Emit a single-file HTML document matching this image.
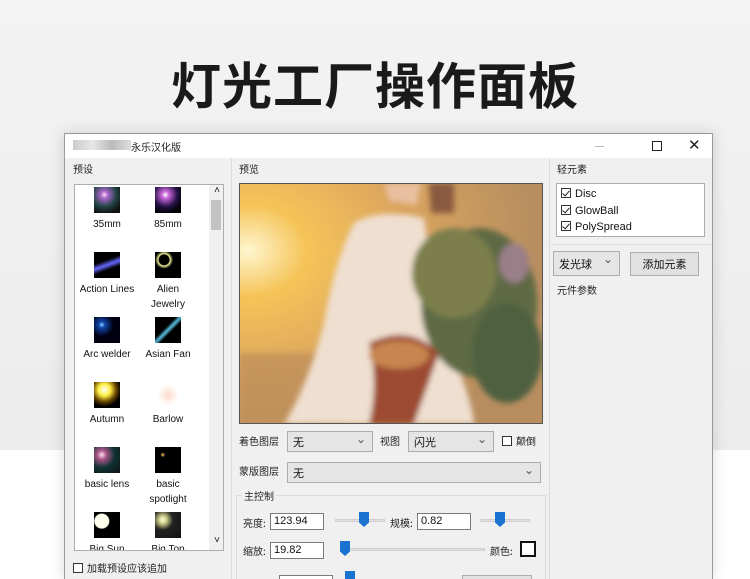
<!DOCTYPE html>
<html><head><meta charset="utf-8"><style>
*{margin:0;padding:0;box-sizing:border-box}
html,body{width:750px;height:579px;overflow:hidden}
body{position:relative;background:#fff;font-family:"Liberation Sans","Noto Sans CJK SC",sans-serif;font-size:11px;color:#111}
.bgtop{position:absolute;left:0;top:0;width:750px;height:450px;background:linear-gradient(#f3f3f3,#ececec)}
h1{position:absolute;left:0;width:750px;top:50px;text-align:center;font-size:50px;font-weight:bold;color:#1a1a1a;letter-spacing:1px;font-family:"Noto Sans CJK SC",sans-serif;line-height:66px}
.win{position:absolute;left:64px;top:133px;width:649px;height:446px;background:#f0f0f0;border:1px solid #9a9a9a;border-bottom:none;box-shadow:0 0 14px rgba(0,0,0,.15)}
.tb{position:absolute;left:0;top:0;width:647px;height:24px;background:#fff}
.a{position:absolute;white-space:nowrap}
.lbl{font-family:"Noto Sans CJK SC",sans-serif;font-size:10px;color:#222}
.list{position:absolute;left:9px;top:50px;width:150px;height:367px;background:#fff;border:1px solid #adadad;overflow:hidden}
.it{position:absolute;width:60px;text-align:center;font-size:10px;line-height:15px}
.ic{width:26px;height:26px;background:#000;margin:0 auto 4px}
.combo{position:absolute;background:#e5e5e5;border:1px solid #adadad;font-family:"Noto Sans CJK SC",sans-serif;font-size:11px;padding:2px 5px;height:21px}
.combo:after{content:"⌄";position:absolute;right:6px;top:-2px;font-size:12px;color:#555}
.inp{position:absolute;background:#fff;border:1px solid #7a7a7a;height:17px;font-size:11px;padding:1px 3px}
.trk{position:absolute;height:3px;background:#e0e0e0;border:1px solid #d0d0d0}
.th{position:absolute;width:10px;height:15px;background:#1a73d0;clip-path:polygon(0 0,100% 0,100% 70%,50% 100%,0 70%)}
.cb{display:inline-block;width:10px;height:10px;border:1px solid #333;vertical-align:-1px;margin-right:4px;position:relative;background:#fff}
.cb.k:after{content:"";position:absolute;left:2px;top:0;width:3px;height:6px;border:solid #222;border-width:0 1px 1px 0;transform:rotate(40deg)}
.btn{position:absolute;background:#e1e1e1;border:1px solid #adadad;text-align:center;font-family:"Noto Sans CJK SC",sans-serif;font-size:11px}
</style></head><body>
<div class="bgtop"></div>
<h1>灯光工厂操作面板</h1>
<div class="win">
 <div class="tb"></div>
 <div class="a" style="left:8px;top:6px;width:58px;height:10px;background:linear-gradient(90deg,#ccc,#e6e6e6,#bbb,#ddd)"></div>
 <div class="a lbl" style="left:66px;top:5px">永乐汉化版</div>
 <div class="a" style="left:530px;top:12px;width:9px;height:1px;background:#bbb"></div>
 <div class="a" style="left:587px;top:7px;width:10px;height:10px;border:1px solid #222"></div>
 <div class="a" style="left:623px;top:2px;font-size:15px;color:#222">✕</div>
 <div class="a" style="left:166px;top:24px;width:1px;height:422px;background:#dcdcdc"></div>
 <div class="a" style="left:484px;top:24px;width:1px;height:422px;background:#dcdcdc"></div>
 <div class="a lbl" style="left:8px;top:27px">预设</div>
 <div class="a lbl" style="left:174px;top:27px">预览</div>
 <div class="a lbl" style="left:492px;top:27px">轻元素</div>
 <div class="list">
  <div class="a" style="right:0;top:0;width:14px;height:367px;background:#f0f0f0"></div>
  <div class="a" style="right:2px;top:15px;width:10px;height:30px;background:#c2c2c2"></div>
  <div class="a" style="right:3px;top:0;font-size:10px">˄</div>
  <div class="a" style="right:3px;top:350px;font-size:10px">˅</div>
  <div class="it" style="left:2px;top:2px"><div class="ic" style="background:radial-gradient(circle at 40% 30%,#fde 0,#a6c 15%,#244 50%,#111 80%)"></div>35mm</div>
  <div class="it" style="left:63px;top:2px"><div class="ic" style="background:radial-gradient(circle at 40% 30%,#fff 0,#c6d 15%,#214 50%,#000 80%)"></div>85mm</div>
  <div class="it" style="left:2px;top:67px"><div class="ic" style="background:linear-gradient(160deg,#000 35%,#66f 50%,#000 65%)"></div>Action Lines</div>
  <div class="it" style="left:63px;top:67px"><div class="ic" style="background:radial-gradient(circle at 35% 30%,#000 5px,#ee9 6px,#000 9px)"></div>Alien<br>Jewelry</div>
  <div class="it" style="left:2px;top:132px"><div class="ic" style="background:radial-gradient(circle at 30% 30%,#8cf 0,#14a 12%,#001 45%)"></div>Arc welder</div>
  <div class="it" style="left:63px;top:132px"><div class="ic" style="background:linear-gradient(135deg,#000 40%,#5bd 50%,#000 60%)"></div>Asian Fan</div>
  <div class="it" style="left:2px;top:197px"><div class="ic" style="background:radial-gradient(circle at 40% 30%,#fff 0,#fe4 25%,#640 50%,#000 70%)"></div>Autumn</div>
  <div class="it" style="left:63px;top:197px"><div class="ic" style="background:radial-gradient(ellipse at 50% 50%,#fdc 0,#fff 60%)"></div>Barlow</div>
  <div class="it" style="left:2px;top:262px"><div class="ic" style="background:radial-gradient(circle at 30% 30%,#fde 0,#a58 18%,#133 50%,#111)"></div>basic lens</div>
  <div class="it" style="left:63px;top:262px"><div class="ic" style="background:radial-gradient(circle at 30% 30%,#fc6 0,#000 10%)"></div>basic<br>spotlight</div>
  <div class="it" style="left:2px;top:327px"><div class="ic" style="background:radial-gradient(circle at 30% 35%,#ffe 7px,#000 8px)"></div>Big Sun</div>
  <div class="it" style="left:63px;top:327px"><div class="ic" style="background:radial-gradient(circle at 30% 30%,#ffd 0,#cc8 15%,#222 40%,#111)"></div>Big Top</div>
 </div>
 <div class="a lbl" style="left:8px;top:426px"><span class="cb"></span>加载预设应该追加</div>
 <svg class="a" style="left:174px;top:49px" width="304" height="241" viewBox="0 0 304 241">
  <defs>
   <radialGradient id="sun" cx="0.03" cy="0.28" r="0.95"><stop offset="0" stop-color="#fff6d0"/><stop offset="0.2" stop-color="#f5c458"/><stop offset="0.55" stop-color="#dba55e"/><stop offset="1" stop-color="#b88e60"/></radialGradient>
   <filter id="bl"><feGaussianBlur stdDeviation="3"/></filter>
  </defs>
  <rect width="304" height="241" fill="url(#sun)"/>
  <rect x="0" y="170" width="110" height="71" fill="#b88a5a" opacity=".6" filter="url(#bl)"/>
  <g filter="url(#bl)">
   <path d="M115 40 Q140 25 185 35 L200 150 Q230 200 235 241 L45 241 Q70 200 85 140 Q95 80 115 40Z" fill="#efdfd0"/>
   <path d="M190 0 L215 0 L215 30 L192 30Z" fill="#8a5a40"/>
   <path d="M145 0 L182 0 L178 22 L150 18Z" fill="#e8c0a0"/>
   <ellipse cx="240" cy="120" rx="58" ry="75" fill="#5e6b44"/>
   <ellipse cx="215" cy="90" rx="42" ry="45" fill="#7c7f4c"/>
   <ellipse cx="268" cy="170" rx="35" ry="50" fill="#4f6040"/>
   <ellipse cx="275" cy="80" rx="15" ry="20" fill="#9a7f88"/>
   <path d="M130 160 Q170 140 200 170 L175 241 L130 241 Q140 200 130 160Z" fill="#9c4c30"/>
   <ellipse cx="160" cy="172" rx="30" ry="14" fill="#c7864f"/>
  </g>
  <rect x="0.5" y="0.5" width="303" height="240" fill="none" stroke="#555"/>
 </svg>
 <div class="a lbl" style="left:174px;top:299px">着色图层</div>
 <div class="combo" style="left:222px;top:297px;width:86px">无</div>
 <div class="a lbl" style="left:315px;top:299px">视图</div>
 <div class="combo" style="left:343px;top:297px;width:86px">闪光</div>
 <div class="a lbl" style="left:437px;top:299px"><span class="cb"></span>颠倒</div>
 <div class="a lbl" style="left:174px;top:329px">蒙版图层</div>
 <div class="combo" style="left:222px;top:328px;width:254px">无</div>
 <div class="a" style="left:171px;top:361px;width:310px;height:90px;border:1px solid #dcdcdc"></div>
 <div class="a lbl" style="left:177px;top:354px;background:#f0f0f0;padding:0 2px">主控制</div>
 <div class="a lbl" style="left:178px;top:381px">亮度:</div>
 <div class="inp" style="left:205px;top:379px;width:54px">123.94</div>
 <div class="trk" style="left:270px;top:385px;width:50px"></div>
 <div class="th" style="left:294px;top:378px"></div>
 <div class="a lbl" style="left:325px;top:381px">规模:</div>
 <div class="inp" style="left:352px;top:379px;width:54px">0.82</div>
 <div class="trk" style="left:415px;top:385px;width:50px"></div>
 <div class="th" style="left:430px;top:378px"></div>
 <div class="a lbl" style="left:178px;top:409px">缩放:</div>
 <div class="inp" style="left:205px;top:408px;width:54px">19.82</div>
 <div class="trk" style="left:275px;top:414px;width:145px"></div>
 <div class="th" style="left:275px;top:407px"></div>
 <div class="a lbl" style="left:425px;top:409px">颜色:</div>
 <div class="a" style="left:455px;top:407px;width:16px;height:16px;border:2px solid #111;background:#fff"></div>
 <div class="inp" style="left:214px;top:441px;width:54px"></div>
 <div class="th" style="left:280px;top:437px"></div>
 <div class="btn" style="left:397px;top:441px;width:70px;height:10px"></div>
 <div class="a" style="left:491px;top:49px;width:149px;height:54px;background:#fff;border:1px solid #adadad;font-size:11px;line-height:16.5px;padding:2px 4px">
  <div><span class="cb k"></span>Disc</div><div><span class="cb k"></span>GlowBall</div><div><span class="cb k"></span>PolySpread</div>
 </div>
 <div class="a" style="left:486px;top:110px;width:161px;height:1px;background:#dcdcdc"></div>
 <div class="combo" style="left:488px;top:117px;width:67px;height:25px;padding-top:4px">发光球</div>
 <div class="btn" style="left:565px;top:118px;width:69px;height:24px;line-height:22px">添加元素</div>
 <div class="a lbl" style="left:492px;top:148px">元件参数</div>
</div>
</body></html>
